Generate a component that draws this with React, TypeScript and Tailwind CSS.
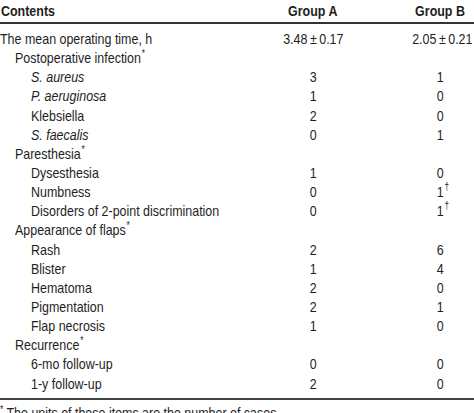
const rows: { label: string; level: number; italic?: boolean; star?: boolean; a?: string; b?: string; dagger?: boolean }[] = [
  { label: "The mean operating time, h", level: 0, a: "3.48\u2009\u00b1\u20090.17", b: "2.05\u2009\u00b1\u20090.21" },
  { label: "Postoperative infection", level: 1, star: true },
  { label: "S. aureus", level: 2, italic: true, a: "3", b: "1" },
  { label: "P. aeruginosa", level: 2, italic: true, a: "1", b: "0" },
  { label: "Klebsiella", level: 2, a: "2", b: "0" },
  { label: "S. faecalis", level: 2, italic: true, a: "0", b: "1" },
  { label: "Paresthesia", level: 1, star: true },
  { label: "Dysesthesia", level: 2, a: "1", b: "0" },
  { label: "Numbness", level: 2, a: "0", b: "1", dagger: true },
  { label: "Disorders of 2-point discrimination", level: 2, a: "0", b: "1", dagger: true },
  { label: "Appearance of flaps", level: 1, star: true },
  { label: "Rash", level: 2, a: "2", b: "6" },
  { label: "Blister", level: 2, a: "1", b: "4" },
  { label: "Hematoma", level: 2, a: "2", b: "0" },
  { label: "Pigmentation", level: 2, a: "2", b: "1" },
  { label: "Flap necrosis", level: 2, a: "1", b: "0" },
  { label: "Recurrence", level: 1, star: true },
  { label: "6-mo follow-up", level: 2, a: "0", b: "0" },
  { label: "1-y follow-up", level: 2, a: "2", b: "0" },
];

// Arial Narrow look: regular Liberation Sans squeezed horizontally
function Narrow({ children, left }: { children: React.ReactNode; left?: boolean }) {
  return (
    <span className={"inline-block whitespace-nowrap scale-x-[0.83] " + (left ? "origin-left" : "origin-center")}>
      {children}
    </span>
  );
}

export default function App() {
  return (
    <div className="w-[474px] h-[413px] overflow-hidden bg-white text-[#1e1e1e] font-['Liberation_Sans',Arial,sans-serif] text-[15px] leading-none">
      {/* header */}
      <div className="flex items-center h-[22px] font-bold pb-[2px]">
        <span className="w-[272px] pl-px">
          <Narrow left>Contents</Narrow>
        </span>
        <span className="w-[82px] text-center">
          <Narrow>Group A</Narrow>
        </span>
        <span className="ml-auto w-[68px] text-center">
          <Narrow>Group B</Narrow>
        </span>
      </div>
      <div className="h-[2px] bg-[#333]" />

      <div className="pt-[5px] pb-[5px]">
        {rows.map((r) => (
          <div key={r.label} className="flex items-center h-[19.15px]">
            <span
              className={
                "w-[272px] " +
                (r.level === 0 ? "pl-0" : r.level === 1 ? "pl-[15px]" : "pl-[31px]") +
                (r.italic ? " italic" : "")
              }
            >
              <Narrow left>
                {r.label}
                {r.star && <span className="text-[10px] relative -top-[6px] ml-px">*</span>}
              </Narrow>
            </span>
            <span className="w-[82px] text-center">
              <Narrow>{r.a}</Narrow>
            </span>
            <span className="ml-auto w-[68px] text-center">
              <Narrow>
                <span className="relative">
                  {r.b}
                  {r.dagger && <span className="absolute left-full -top-[1px] text-[10px] pl-px">†</span>}
                </span>
              </Narrow>
            </span>
          </div>
        ))}
      </div>
      <div className="h-[2px] bg-[#444]" />

      {/* footnote */}
      <div className="pt-[5px] text-[15px]">
        <Narrow left>
          <span className="text-[10px] relative -top-[5px]">*</span> The units of these items are the number of cases.
        </Narrow>
      </div>
    </div>
  );
}
